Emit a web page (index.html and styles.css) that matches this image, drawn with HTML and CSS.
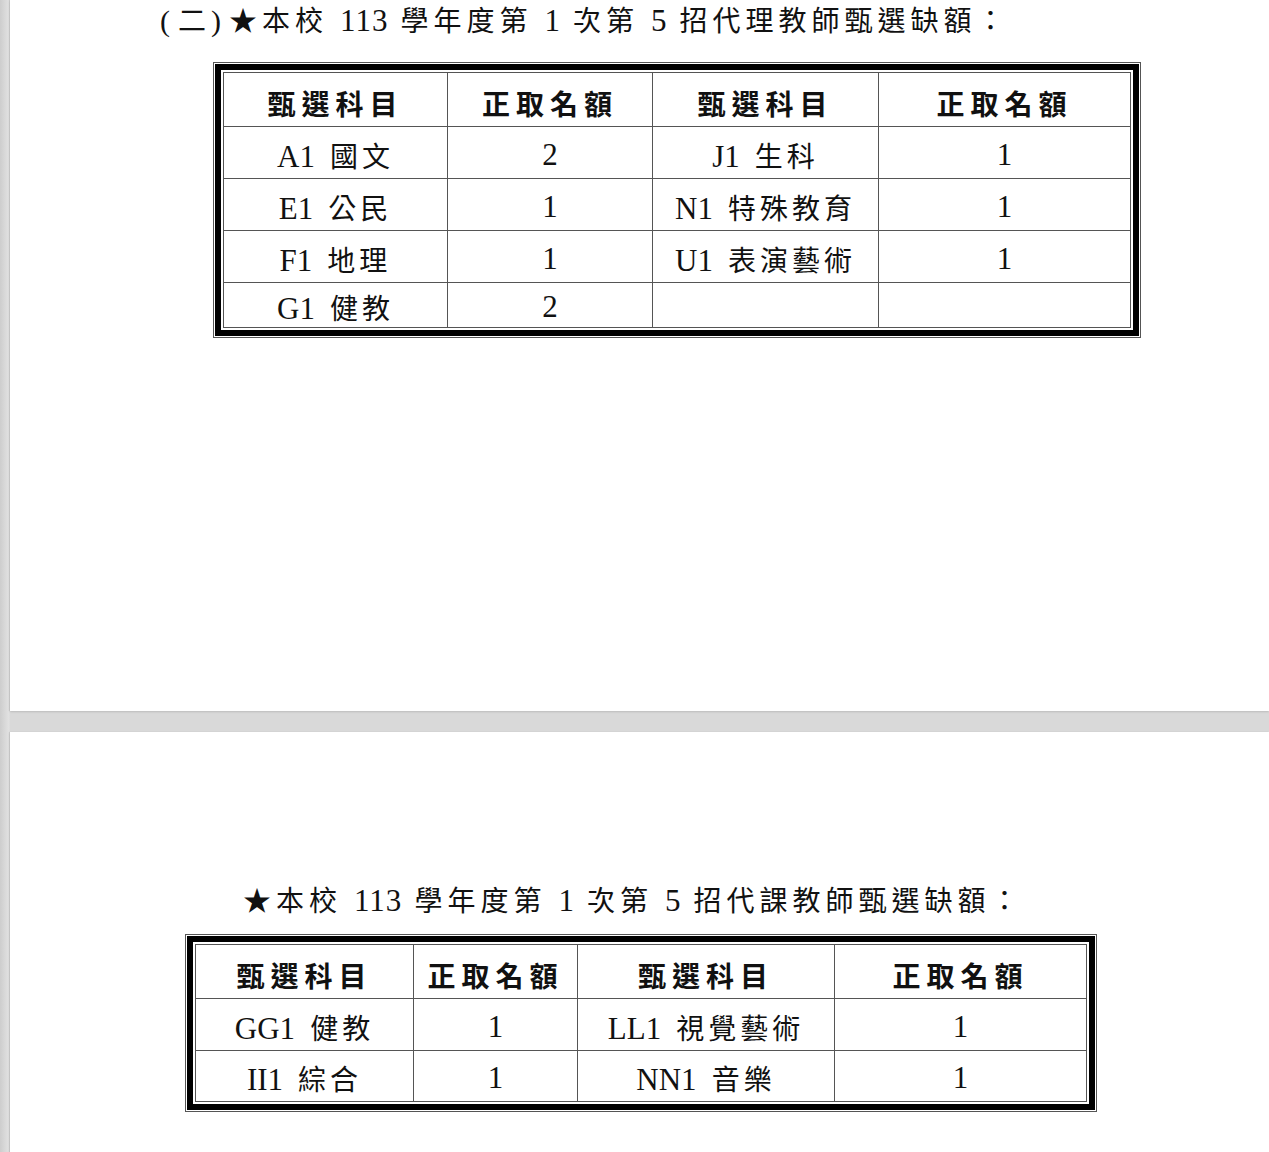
FILE: index.html
```html
<!DOCTYPE html>
<html lang="zh-Hant">
<head>
<meta charset="utf-8">
<title>代理代課教師甄選缺額</title>
<link rel="stylesheet" href="styles.css">
</head>
<body>
<div class="viewer">
  <section class="page page-one">
    <h2 class="doc-title title-one"><span class="paren">(</span>二<span class="paren">)</span>★本校 <span class="lat">113</span> 學年度第 <span class="lat">1</span> 次第 <span class="lat">5</span> 招代理教師甄選缺額：</h2>
    <div class="frame frame-one">
      <div class="frame-thick">
        <table class="quota quota-one">
          <colgroup>
            <col class="c1a"><col class="c1b"><col class="c1c"><col class="c1d">
          </colgroup>
          <thead>
            <tr class="head-row">
              <th>甄選科目</th><th>正取名額</th><th>甄選科目</th><th>正取名額</th>
            </tr>
          </thead>
          <tbody>
            <tr class="row"><td><span class="lat">A1</span> 國文</td><td><span class="num">2</span></td><td><span class="lat">J1</span> 生科</td><td><span class="num">1</span></td></tr>
            <tr class="row"><td><span class="lat">E1</span> 公民</td><td><span class="num">1</span></td><td><span class="lat">N1</span> 特殊教育</td><td><span class="num">1</span></td></tr>
            <tr class="row"><td><span class="lat">F1</span> 地理</td><td><span class="num">1</span></td><td><span class="lat">U1</span> 表演藝術</td><td><span class="num">1</span></td></tr>
            <tr class="row row-last"><td><span class="lat">G1</span> 健教</td><td><span class="num">2</span></td><td></td><td></td></tr>
          </tbody>
        </table>
      </div>
    </div>
  </section>
  <section class="page page-two">
    <h2 class="doc-title title-two">★本校 <span class="lat">113</span> 學年度第 <span class="lat">1</span> 次第 <span class="lat">5</span> 招代課教師甄選缺額：</h2>
    <div class="frame frame-two">
      <div class="frame-thick">
        <table class="quota quota-two">
          <colgroup>
            <col class="c2a"><col class="c2b"><col class="c2c"><col class="c2d">
          </colgroup>
          <thead>
            <tr class="head-row">
              <th>甄選科目</th><th>正取名額</th><th>甄選科目</th><th>正取名額</th>
            </tr>
          </thead>
          <tbody>
            <tr class="row"><td><span class="lat">GG1</span> 健教</td><td><span class="num">1</span></td><td><span class="lat">LL1</span> 視覺藝術</td><td><span class="num">1</span></td></tr>
            <tr class="row row-end"><td><span class="lat">II1</span> 綜合</td><td><span class="num">1</span></td><td><span class="lat">NN1</span> 音樂</td><td><span class="num">1</span></td></tr>
          </tbody>
        </table>
      </div>
    </div>
  </section>
</div>
</body>
</html>
```

FILE: styles.css
```css
html, body {
  margin: 0;
  padding: 0;
}

body {
  background: #d9d9d9;
  font-family: "Liberation Serif", "Noto Sans CJK TC", serif;
  color: #111;
  overflow: hidden;
}

.viewer {
  display: flex;
  flex-direction: column;
  gap: 21px;
  padding-left: 10px;
  background: linear-gradient(to right, #cdcdcd 0, #e2e2e2 9px, #d9d9d9 10px);
}

.page {
  background: #fff;
  box-shadow: -1px 0 1px rgba(0,0,0,0.08), 0 1px 2px rgba(0,0,0,0.12);
}

.page-one {
  height: 711px;
}

.page-two {
  height: 440px;
  padding-top: 149px;
  box-sizing: border-box;
}

.doc-title {
  margin: 0;
  font-weight: 400;
  font-size: 28px;
  line-height: 42px;
  letter-spacing: 5px;
  white-space: nowrap;
  color: #111;
}

.doc-title .lat {
  font-size: 31px;
  letter-spacing: 1px;
}

.paren {
  font-size: 30px;
  letter-spacing: 8px;
}

.title-one {
  padding-left: 150px;
}

.title-two {
  padding-left: 233px;
  margin-top: -1px;
}

.frame {
  display: inline-block;
  border: 1px solid #555;
  padding: 1px;
  vertical-align: top;
}

.frame-one {
  margin-left: 203px;
  margin-top: 19px;
}

.frame-two {
  margin-left: 175px;
  margin-top: 11px;
}

.frame-thick {
  border: 6px solid #000;
  padding: 2px;
}

.quota {
  border-collapse: collapse;
  table-layout: fixed;
  border: 1px solid #444;
}

.quota-one {
  width: 907px;
}

.quota-two {
  width: 891px;
}

.c1a { width: 224px; }
.c1b { width: 205px; }
.c1c { width: 226px; }
.c1d { width: 252px; }

.c2a { width: 218px; }
.c2b { width: 164px; }
.c2c { width: 257px; }
.c2d { width: 252px; }

.quota th,
.quota td {
  border: 1px solid #555;
  padding: 0;
  text-align: center;
  vertical-align: middle;
  white-space: nowrap;
  font-size: 28px;
  letter-spacing: 4px;
  color: #111;
}

.quota .lat {
  font-size: 31px;
  letter-spacing: 0;
  margin-right: 4px;
}

.quota .num {
  font-size: 31px;
  letter-spacing: 0;
}

.quota th {
  font-family: "Noto Sans CJK TC", sans-serif;
  font-weight: 700;
  letter-spacing: 6px;
  padding-top: 6px;
}

.head-row {
  height: 54px;
}

.row {
  height: 52px;
}

.row td {
  padding-top: 4px;
}

.row-last {
  height: 44px;
}

.row-end {
  height: 51px;
}
```
